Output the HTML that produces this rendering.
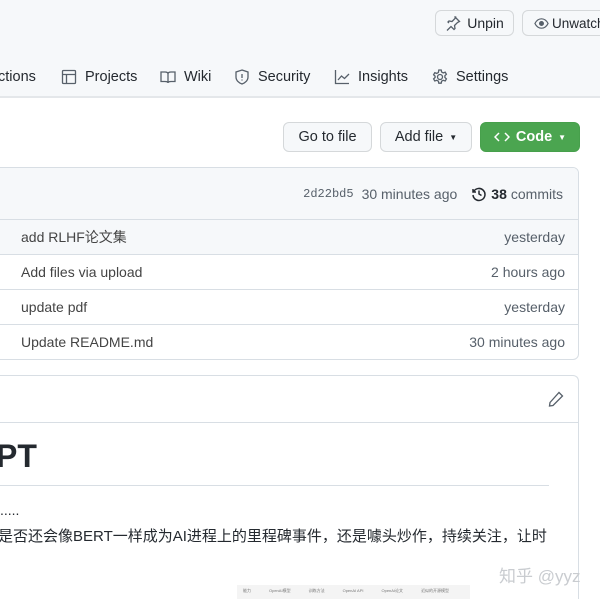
<!DOCTYPE html>
<html style="width:600px;height:599px;overflow:hidden"><head><meta charset="utf-8"><style>
*{box-sizing:border-box;margin:0;padding:0}
body{width:600px;height:599px;overflow:hidden;background:#fff;font-family:"Liberation Sans","Noto Sans CJK SC",sans-serif;color:#24292f;position:relative;font-size:14px}
.top{position:absolute;left:0;top:0;width:600px;height:98px;background:#f6f8fa;border-bottom:2px solid #e4e7ea}
.btn{position:absolute;border:1px solid #d5d8da;border-radius:6px;background:#f6f8fa;font-size:14px;display:flex;align-items:center;justify-content:center;gap:6px;color:#24292f}
.nav{position:absolute;top:69px;font-size:14.5px;display:flex;align-items:center;gap:8px}
svg{display:block}
.box{position:absolute;left:-10px;width:589px;border:1px solid #d8dee4;border-radius:6px;overflow:hidden}
.row{height:35px;border-top:1px solid #d8dee4;display:flex;align-items:center;justify-content:space-between;padding:0 13px 0 30px;font-size:14px;color:#57606a}
.row .r{color:#57606a}
.row .l{color:#444}
</style></head><body>
<div class="top"></div>
<div class="btn" style="left:435px;top:10px;width:79px;height:26px"><svg width="16" height="16" viewBox="0 0 16 16" fill="none" stroke="#57606a" stroke-width="1.3"><path d="M9.5 1.5l5 5-2 1-3 3 .5 3-1 1-3-3-4 4M4 8l-1-1 1-1 3 .5 3-3 1-2"/></svg>Unpin</div>
<div class="btn" style="left:522px;top:10px;width:100px;height:26px;justify-content:flex-start;padding-left:11px;gap:3px;font-size:13.5px"><svg width="15" height="15" viewBox="0 0 16 16" fill="none" stroke="#57606a" stroke-width="1.3"><path d="M1 8c2-4 5-5 7-5s5 1 7 5c-2 4-5 5-7 5S3 12 1 8z"/><circle cx="8" cy="8" r="2" fill="#57606a"/></svg>Unwatch</div>
<div class="nav" style="left:-2px">ctions</div>
<div class="nav" style="left:61px"><svg width="16" height="16" viewBox="0 0 16 16" fill="none" stroke="#57606a" stroke-width="1.3"><rect x="1.5" y="1.5" width="13" height="13" rx="1"/><path d="M1.5 5.5h13M5.5 5.5v9"/></svg>Projects</div>
<div class="nav" style="left:160px"><svg width="16" height="16" viewBox="0 0 16 16" fill="none" stroke="#57606a" stroke-width="1.3"><path d="M1 3h4c1.5 0 3 .5 3 2v9c0-1-1.5-1.5-3-1.5H1zM15 3h-4c-1.5 0-3 .5-3 2v9c0-1 1.5-1.5 3-1.5h4z"/></svg>Wiki</div>
<div class="nav" style="left:234px"><svg width="16" height="16" viewBox="0 0 16 16" fill="none" stroke="#57606a" stroke-width="1.3"><path d="M8 1l6 2v5c0 3.5-3 6-6 7-3-1-6-3.5-6-7V3z"/><path d="M8 5v4M8 10.5v1"/></svg>Security</div>
<div class="nav" style="left:334px"><svg width="16" height="16" viewBox="0 0 16 16" fill="none" stroke="#57606a" stroke-width="1.3"><path d="M1.5 1v13.5H15M4 11l3.5-4 3 2.5L15 5"/></svg>Insights</div>
<div class="nav" style="left:432px"><svg width="16" height="16" viewBox="0 0 16 16" fill="none" stroke="#57606a" stroke-width="1.3"><circle cx="8" cy="8" r="2.5"/><path d="M6.8 1h2.4l.4 2 1.6.9 2-.7 1.2 2.1-1.5 1.4v1.8l1.5 1.4-1.2 2.1-2-.7-1.6.9-.4 2H6.8l-.4-2-1.6-.9-2 .7-1.2-2.1 1.5-1.4V7.2L1.6 5.8l1.2-2.1 2 .7 1.6-.9z"/></svg>Settings</div>

<div class="btn" style="left:283px;top:122px;width:89px;height:30px;font-size:14.5px">Go to file</div>
<div class="btn" style="left:380px;top:122px;width:92px;height:30px;font-size:14.5px">Add file <span style="font-size:8px">▼</span></div>
<div class="btn" style="left:480px;top:122px;width:100px;height:30px;background:#4ba550;border-color:#47a04c;color:#fff;font-size:14.5px;font-weight:bold"><svg width="16" height="16" viewBox="0 0 16 16" fill="none" stroke="#fff" stroke-width="1.5"><path d="M5 4L1 8l4 4M11 4l4 4-4 4"/></svg>Code <span style="font-size:8px">▼</span></div>

<div class="box" style="top:167px;height:193px">
 <div style="height:51px;background:#f6f8fa;display:flex;align-items:center;justify-content:flex-end;padding-right:15px;font-size:14px;color:#57606a;gap:8px">
  <span style="font-family:'Liberation Mono',monospace;font-size:12px">2d22bd5</span><span>30 minutes ago</span>
  <span style="margin-left:6px;display:flex;align-items:center;gap:4px"><svg width="16" height="16" viewBox="0 0 16 16" fill="none" stroke="#24292f" stroke-width="1.5"><path d="M2 3v3h3M2.5 6A6 6 0 1 1 2 9"/><path d="M8 4.5V8l2.5 1.5"/></svg><b style="color:#24292f">38</b> commits</span>
 </div>
 <div class="row" style="background:#f6f8fa"><span class="l">add RLHF论文集</span><span class="r">yesterday</span></div>
 <div class="row"><span class="l">Add files via upload</span><span class="r">2 hours ago</span></div>
 <div class="row"><span class="l">update pdf</span><span class="r">yesterday</span></div>
 <div class="row"><span class="l">Update README.md</span><span class="r">30 minutes ago</span></div>
</div>

<div class="box" style="top:375px;height:224px;border-bottom:none;border-radius:6px 6px 0 0">
 <div style="height:47px;border-bottom:1px solid #d8dee4;position:relative"><svg style="position:absolute;left:557px;top:15px" width="16" height="16" viewBox="0 0 16 16" fill="none" stroke="#57606a" stroke-width="1.3"><path d="M11 1.5l3.5 3.5L5 14.5 1.5 15l.5-3.5z"/></svg></div>
</div>
<div style="position:absolute;left:-4px;top:438px;font-size:32px;font-weight:bold;color:#24292f">PT</div>
<div style="position:absolute;left:0;top:485px;width:549px;height:1px;background:#d8dee4"></div>
<div style="position:absolute;left:0;top:502px;font-size:14px">.....</div>
<div style="position:absolute;left:-2px;top:525px;font-size:15px;white-space:nowrap">是否还会像BERT一样成为AI进程上的里程碑事件，还是噱头炒作，持续关注，让时</div>
<div style="position:absolute;left:499px;top:562px;font-size:17px;color:#c9ccd0;white-space:nowrap">知乎 @yyz</div>
<div style="position:absolute;left:237px;top:585px;width:233px;height:14px;background:#f4f4f4;font-size:4px;color:#777;display:flex;gap:18px;padding:3px 6px;white-space:nowrap;overflow:hidden">
<span>能力</span><span>OpenAI模型</span><span>训练方法</span><span>OpenAI API</span><span>OpenAI论文</span><span>近似的开源模型</span></div>
</body></html>
